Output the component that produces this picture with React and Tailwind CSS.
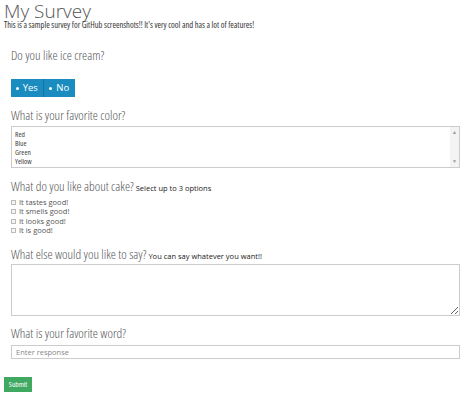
import React from 'react';

const font = { fontFamily: '"Open Sans", "Liberation Sans", sans-serif' };

function Question({ children, hint }) {
  return (
    <div className="text-[13px] leading-[14px] font-light text-[#555] [font-stretch:75%]">
      {children}
      {hint && (
        <span className="ml-[2px] text-[7.5px] font-normal text-[#222] [font-stretch:100%]">{hint}</span>
      )}
    </div>
  );
}

export default function App() {
  const colors = ['Red', 'Blue', 'Green', 'Yellow'];
  const cake = ['It tastes good!', 'It smells good!', 'It looks good!', 'It is good!'];

  return (
    <div className="bg-white min-h-[401px] w-[474px]" style={font}>
      <div className="px-[4px]">
        <h1 className="pt-[1px] text-[19px] leading-[21px] font-light text-[#555] [font-stretch:88%]">My Survey</h1>
        <p className="-mt-[2px] text-[8.5px] leading-[9px] text-[#333] [font-stretch:75%]">
          This is a sample survey for GitHub screenshots!! It's very cool and has a lot of features!
        </p>
      </div>

      <div className="ml-[11px] w-[449px]">
        <div className="mt-[19px]">
          <Question>Do you like ice cream?</Question>
        </div>
        <div className="mt-[17px] flex w-[64px] h-[18px] bg-[#1b8cc0] text-white text-[9.5px]">
          <div className="flex-1 flex items-center justify-center gap-[4px] border-r border-[#16729d]">
            <span className="w-[3px] h-[3px] rounded-full bg-white" />Yes
          </div>
          <div className="flex-1 flex items-center justify-center gap-[4px]">
            <span className="w-[3px] h-[3px] rounded-full bg-white" />No
          </div>
        </div>

        <div className="mt-[11px]">
          <Question>What is your favorite color?</Question>
        </div>
        <div className="mt-[4px] h-[42px] border border-[#ccc] flex">
          <div className="flex-1 pl-[3px] pt-[3px] text-[7.5px] leading-[9px] text-[#444] [font-stretch:75%]">
            {colors.map((c) => (
              <div key={c}>{c}</div>
            ))}
          </div>
          <div className="w-[9px] bg-[#f3f3f3] flex flex-col justify-between items-center py-[2px] text-[5px] text-[#999]">
            <span>▲</span>
            <span>▼</span>
          </div>
        </div>

        <div className="mt-[11px]">
          <Question hint="Select up to 3 options">What do you like about cake?</Question>
        </div>
        <div className="mt-[3px] text-[7.5px] leading-[9.3px] text-[#555]">
          {cake.map((c) => (
            <div key={c} className="flex items-center gap-[3px]">
              <span className="w-[5px] h-[5px] border border-[#bbb] bg-[#f5f5f5]" />
              {c}
            </div>
          ))}
        </div>

        <div className="mt-[12px]">
          <Question hint="You can say whatever you want!!">What else would you like to say?</Question>
        </div>
        <textarea className="mt-[1px] block w-full h-[52px] border border-[#ccc] resize-y" />

        <div className="mt-[10px]">
          <Question>What is your favorite word?</Question>
        </div>
        <input
          className="mt-[5px] block w-full h-[14px] border border-[#ccc] px-[4px] text-[7.5px] placeholder:text-[#888] outline-none"
          placeholder="Enter response"
        />
      </div>

      <div className="px-[4px] mt-[18px]">
        <button className="h-[15px] w-[28px] bg-[#3fa962] text-white text-[7.5px] [font-stretch:75%] flex items-center justify-center">
          Submit
        </button>
      </div>
    </div>
  );
}
